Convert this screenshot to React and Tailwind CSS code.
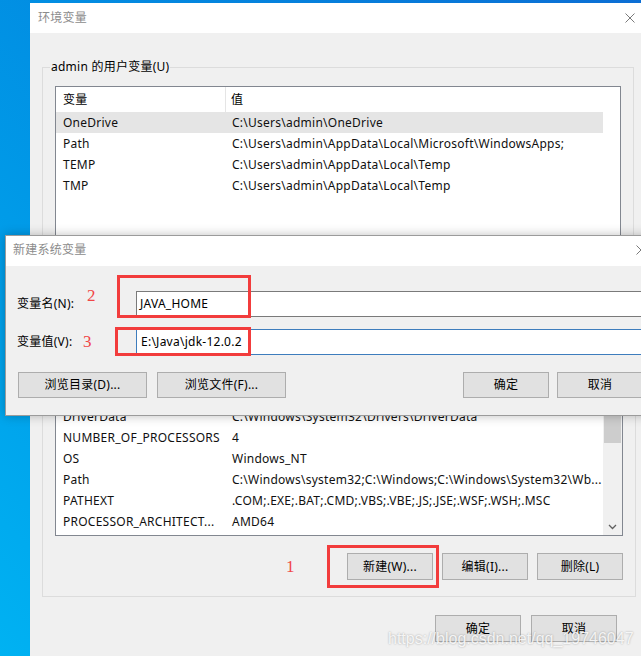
import React from 'react'

const font = { fontFamily: '"Noto Sans", "Noto Sans CJK SC", sans-serif' }

const userVars = [
    ['OneDrive', 'C:\\Users\\admin\\OneDrive'],
    ['Path', 'C:\\Users\\admin\\AppData\\Local\\Microsoft\\WindowsApps;'],
    ['TEMP', 'C:\\Users\\admin\\AppData\\Local\\Temp'],
    ['TMP', 'C:\\Users\\admin\\AppData\\Local\\Temp'],
]

const sysVars = [
    ['ComSpec', 'C:\\Windows\\system32\\cmd.exe'],
    ['DriverData', 'C:\\Windows\\System32\\Drivers\\DriverData'],
    ['NUMBER_OF_PROCESSORS', '4'],
    ['OS', 'Windows_NT'],
    ['Path', 'C:\\Windows\\system32;C:\\Windows;C:\\Windows\\System32\\Wb...'],
    ['PATHEXT', '.COM;.EXE;.BAT;.CMD;.VBS;.VBE;.JS;.JSE;.WSF;.WSH;.MSC'],
    ['PROCESSOR_ARCHITECT...', 'AMD64'],
]

function CloseIcon() {
    return (
        <svg width="10" height="10" viewBox="0 0 10 10" className="shrink-0">
            <line x1="0.5" y1="0.5" x2="9.5" y2="9.5" stroke="#7a7a7a" strokeWidth="1" />
            <line x1="9.5" y1="0.5" x2="0.5" y2="9.5" stroke="#7a7a7a" strokeWidth="1" />
        </svg>
    )
}

function WinButton({ children, className = '' }) {
    return (
        <button className={`flex items-center justify-center border border-[#adadad] bg-[#e1e1e1] text-[12px] text-black ${className}`}>
            {children}
        </button>
    )
}

function VarList({ rows, selected, scrollbar, height }) {
    return (
        <div className={`flex overflow-hidden border border-[#828790] bg-white ${height}`}>
            <div className="w-[547px] shrink-0 overflow-hidden">
                <div className="flex h-[25px] items-center text-[12px] text-black">
                    <div className="h-full w-[170px] border-r border-[#e5e5e5] pl-[7px] leading-[25px]">变量</div>
                    <div className="pl-[5px]">值</div>
                </div>
                {rows.map(([name, value], index) => (
                    <div
                        key={index}
                        className={`flex h-[21px] items-center whitespace-nowrap text-[12px] text-[#101010] ${index === selected ? 'bg-[#e5e5e5]' : ''}`}
                    >
                        <div className="w-[170px] shrink-0 pl-[7px]">{name}</div>
                        <div className="pl-[6px]">{value}</div>
                    </div>
                ))}
            </div>
            {scrollbar ? (
                <div className="flex w-[19px] flex-col bg-[#f0f0f0]">
                    <div className="h-[17px]" />
                    <div className="mx-[1px] h-[66px] bg-[#cdcdcd]" />
                    <div className="flex-1" />
                    <div className="flex h-[17px] items-center justify-center">
                        <svg width="9" height="6" viewBox="0 0 9 6">
                            <polyline points="1,1 4.5,4.5 8,1" fill="none" stroke="#606060" strokeWidth="1.3" />
                        </svg>
                    </div>
                </div>
            ) : (
                <div className="flex-1 bg-white" />
            )}
        </div>
    )
}

function RedNumber({ children, className }) {
    return (
        <span
            className={`absolute text-[17px] leading-none tracking-normal text-[#f04646] ${className}`}
            style={{ fontFamily: '"Liberation Serif", serif' }}
        >
            {children}
        </span>
    )
}

export default function App() {
    return (
        <div className="relative h-[656px] w-[641px] overflow-hidden bg-linear-to-tr from-[#00b2f2] to-[#0c6ed4] tracking-[0.25px]" style={font}>
            {/* 环境变量 window */}
            <div className="ml-[30px] mt-[3px] h-[653px] w-[620px] bg-[#f0f0f0]">
                <div className="flex h-[30px] items-center justify-between bg-white pl-[8px] pr-[15px]">
                    <span className="text-[12px] text-[#8c8c8c]">环境变量</span>
                    <CloseIcon />
                </div>

                <fieldset className="ml-[12px] mt-[26px] w-[592px] border border-[#dcdcdc] px-[12px] pb-[16px] pt-[11px]">
                    <legend className="-ml-[5px] px-[1px] text-[12px] leading-[16px] text-black">admin 的用户变量(U)</legend>
                    <VarList rows={userVars} selected={0} height="h-[150px]" />
                    <div className="mt-[17px] flex justify-end gap-[9px]">
                        <WinButton className="h-[27px] w-[86px]">新建(N)...</WinButton>
                        <WinButton className="h-[27px] w-[86px]">编辑(E)...</WinButton>
                        <WinButton className="h-[27px] w-[86px]">删除(D)</WinButton>
                    </div>
                </fieldset>

                <fieldset className="ml-[12px] mt-[20px] w-[592px] border border-[#dcdcdc] px-[12px] pb-[16px] pt-[26px]">
                    <legend className="-ml-[5px] px-[1px] text-[12px] leading-[16px] text-black">系统变量(S)</legend>
                    <VarList rows={sysVars} selected={-1} scrollbar height="h-[177px]" />
                    <div className="mt-[17px] flex justify-end gap-[9px]">
                        <WinButton className="h-[27px] w-[86px]">新建(W)...</WinButton>
                        <WinButton className="h-[27px] w-[86px]">编辑(I)...</WinButton>
                        <WinButton className="h-[27px] w-[86px]">删除(L)</WinButton>
                    </div>
                </fieldset>

                <div className="ml-[12px] mt-[18px] flex w-[592px] justify-end gap-[10px] pr-[17px]">
                    <WinButton className="h-[27px] w-[86px]">确定</WinButton>
                    <WinButton className="h-[27px] w-[86px]">取消</WinButton>
                </div>
            </div>

            {/* 新建系统变量 dialog */}
            <div className="absolute left-[5px] top-[235px] w-[656px] border border-[#9b9b9b] bg-[#f0f0f0] shadow-[0_0_10px_rgba(0,0,0,0.25)]">
                <div className="flex h-[30px] items-center justify-between bg-white pb-[2px] pl-[7px] pr-[14px]">
                    <span className="text-[12px] text-[#8c8c8c]">新建系统变量</span>
                    <CloseIcon />
                </div>
                <div className="pb-[17px] pl-[11px] pr-[17px] pt-[25px]">
                    <div className="flex items-center">
                        <span className="w-[119px] shrink-0 text-[12px] text-black">变量名(N):</span>
                        <div className="flex h-[26px] flex-1 items-center border border-[#7a7a7a] bg-white pl-[3px] text-[12px] text-black">
                            JAVA_HOME
                        </div>
                    </div>
                    <div className="mt-[12px] flex items-center">
                        <span className="w-[119px] shrink-0 text-[12px] text-black">变量值(V):</span>
                        <div className="flex h-[26px] flex-1 items-center border border-[#3e7dbd] bg-white pl-[4px] text-[12px] text-black">
                            E:\Java\jdk-12.0.2
                        </div>
                    </div>
                    <div className="mt-[17px] flex items-center">
                        <WinButton className="ml-[1px] h-[26px] w-[129px]">浏览目录(D)...</WinButton>
                        <WinButton className="ml-[10px] h-[26px] w-[129px]">浏览文件(F)...</WinButton>
                        <div className="flex-1" />
                        <WinButton className="h-[26px] w-[86px]">确定</WinButton>
                        <WinButton className="ml-[8px] h-[26px] w-[86px]">取消</WinButton>
                    </div>
                </div>
            </div>

            {/* red annotations */}
            <div className="absolute left-[117px] top-[275px] h-[43px] w-[134px] border-[3px] border-[#f23c3c]" />
            <div className="absolute left-[115px] top-[327px] h-[29px] w-[136px] border-[3px] border-[#f23c3c]" />
            <div className="absolute left-[327px] top-[545px] h-[43px] w-[112px] border-[3px] border-[#f23c3c]" />
            <RedNumber className="left-[87px] top-[287px]">2</RedNumber>
            <RedNumber className="left-[83px] top-[333px]">3</RedNumber>
            <RedNumber className="left-[286px] top-[558px]">1</RedNumber>

            {/* watermark */}
            <span
                className="absolute left-[388px] top-[627px] whitespace-nowrap text-[16px] tracking-normal text-white/85 [text-shadow:0_0_2px_rgba(0,0,0,0.35)]"
                style={{ fontFamily: '"Liberation Sans", sans-serif' }}
            >
                https://blog.csdn.net/qq_19746047
            </span>
        </div>
    )
}
